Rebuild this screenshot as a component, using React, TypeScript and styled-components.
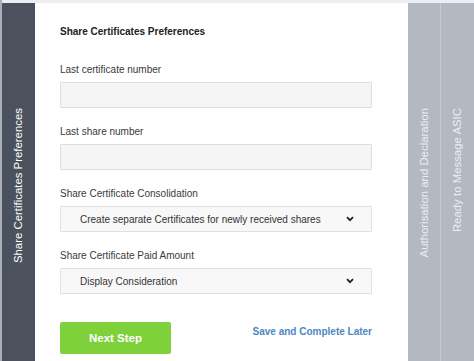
import styled, { createGlobalStyle } from 'styled-components';

const GlobalStyle = createGlobalStyle`
  html, body {
    margin: 0;
    padding: 0;
  }

  body {
    font-family: "Liberation Sans", Arial, sans-serif;
  }
`;

type Field = { label: string; kind: 'input' | 'select'; value?: string };

const fields: Field[] = [
  { label: 'Last certificate number', kind: 'input' },
  { label: 'Last share number', kind: 'input' },
  {
    label: 'Share Certificate Consolidation',
    kind: 'select',
    value: 'Create separate Certificates for newly received shares',
  },
  { label: 'Share Certificate Paid Amount', kind: 'select', value: 'Display Consideration' },
];

const steps = ['Authorisation and Declaration', 'Ready to Message ASIC'];

function Chevron() {
  return (
    <svg width="8" height="6" viewBox="0 0 8 6">
      <polyline points="1,1.2 4,4.2 7,1.2" fill="none" stroke="#222" strokeWidth="1.8" />
    </svg>
  );
}

function App() {
  return (
    <>
      <GlobalStyle />
      <Page>
        <Edge />
        <Main>
          <Sidebar>
            <VerticalLabel>Share Certificates Preferences</VerticalLabel>
          </Sidebar>
          <Content>
            <Title>Share Certificates Preferences</Title>
            <Form>
              {fields.map(({ label, kind, value }) => (
                <Group key={label}>
                  <Label>{label}</Label>
                  {kind === 'input' ? (
                    <Input />
                  ) : (
                    <Select>
                      <span>{value}</span>
                      <Chevron />
                    </Select>
                  )}
                </Group>
              ))}
            </Form>
            <Actions>
              <NextButton>Next Step</NextButton>
              <SaveLink>Save and Complete Later</SaveLink>
            </Actions>
          </Content>
          {steps.map((step, i) => (
            <Tab key={step} $last={i === steps.length - 1}>
              <VerticalLabel $muted>{step}</VerticalLabel>
            </Tab>
          ))}
        </Main>
      </Page>
    </>
  );
}

export default App;

const Page = styled.div`
  display: flex;
  width: 474px;
  height: 361px;
  overflow: hidden;

  background-color: #eceef3;
`;

const Edge = styled.div`
  flex: 0 0 2px;

  background-color: #a9aeb8;
`;

const Main = styled.div`
  flex: 1;
  display: flex;

  padding-top: 3px;
`;

const Sidebar = styled.div`
  flex: 0 0 33px;
  display: flex;
  flex-direction: column;
  align-items: center;

  padding-top: 105px;

  background-color: #4b525d;
`;

const VerticalLabel = styled.span<{ $muted?: boolean }>`
  writing-mode: vertical-rl;
  transform: rotate(180deg);

  font-size: 11.4px;
  line-height: 13px;
  white-space: nowrap;
  color: ${({ $muted }) => ($muted ? '#eceef2' : '#ffffff')};
`;

const Content = styled.div`
  flex: 0 0 373px;
  box-sizing: border-box;

  padding: 23px 36px 0 25px;

  background-color: #ffffff;
`;

const Title = styled.div`
  font-size: 10px;
  font-weight: bold;
  line-height: 12px;
  color: #222;
`;

const Form = styled.div`
  display: flex;
  flex-direction: column;
  gap: 18px;

  margin-top: 26px;
`;

const Group = styled.div`
  display: flex;
  flex-direction: column;
  gap: 6px;
`;

const Label = styled.div`
  font-size: 10px;
  line-height: 12px;
  color: #3a3a3a;
`;

const Input = styled.div`
  height: 24px;

  border: 1px solid #dedede;
  border-radius: 1px;

  background-color: #f5f5f5;
`;

const Select = styled.div`
  display: flex;
  align-items: center;
  justify-content: space-between;
  height: 24px;

  padding: 0 17px 0 19px;
  border: 1px solid #e0e0e0;
  border-radius: 1px;

  background-color: #f8f8f8;

  font-size: 10px;
  color: #333;
`;

const Actions = styled.div`
  display: flex;
  align-items: flex-start;
  justify-content: space-between;

  margin-top: 28px;
`;

const NextButton = styled.button`
  width: 111px;
  height: 32px;

  border: none;
  border-radius: 2px;

  background-color: #7fd13b;

  font-family: inherit;
  font-size: 11.5px;
  font-weight: bold;
  color: #ffffff;
`;

const SaveLink = styled.a`
  margin-top: 4px;

  font-size: 10px;
  font-weight: bold;
  line-height: 12px;
  color: #4f86bf;
`;

const Tab = styled.div<{ $last?: boolean }>`
  flex: 0 0 33px;
  box-sizing: border-box;
  display: flex;
  flex-direction: column;
  align-items: center;

  padding-top: 105px;
  border-right: ${({ $last }) => ($last ? 'none' : '1px solid #c6cad1')};

  background-color: #b3b8c1;
`;
